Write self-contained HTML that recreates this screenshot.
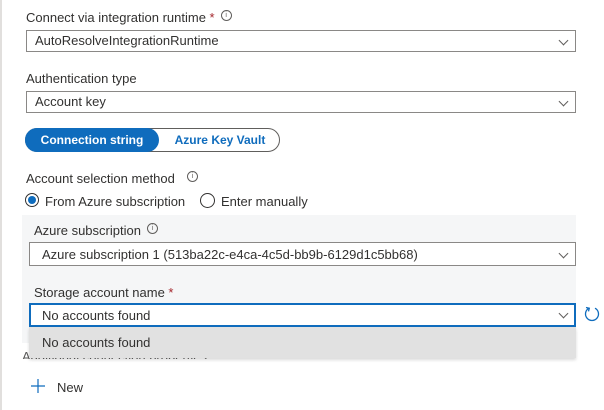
<!DOCTYPE html>
<html><head><style>
body{margin:0;width:604px;height:410px;background:#fff;font-family:"Liberation Sans",sans-serif;font-size:13px;color:#323130;position:relative;overflow:hidden}
.a{position:absolute}
.lbl{font-size:13px;color:#323130}
.inp{position:absolute;border:1px solid #8a8886;background:#fff;box-sizing:border-box;height:22px;line-height:20px;padding-left:8px;font-size:13px}
.chev{position:absolute;right:8px;top:6px;width:6px;height:6px;border-right:1px solid #605e5c;border-bottom:1px solid #605e5c;transform:rotate(45deg)}
.info{display:inline-block;width:9px;height:9px;border:1px solid #605e5c;border-radius:50%;font-size:7px;line-height:9px;text-align:center;vertical-align:top;margin-left:6px;color:#605e5c}
.req{color:#a4262c}
</style></head><body>
<div class="a" style="left:0;top:0;width:2px;height:410px;background:#e1dfdd"></div>
<div class="a lbl" style="left:26px;top:10px">Connect via integration runtime <span class="req">*</span><span class="info">i</span></div>
<div class="inp" style="left:26px;top:30px;width:550px">AutoResolveIntegrationRuntime<div class="chev"></div></div>
<div class="a lbl" style="left:26px;top:71px">Authentication type</div>
<div class="inp" style="left:26px;top:91px;width:550px">Account key<div class="chev"></div></div>
<div class="a" style="left:25px;top:128px;width:255px;height:24px;border:1px solid #605e5c;border-radius:13px;box-sizing:border-box"></div>
<div class="a" style="left:25px;top:128px;width:134px;height:24px;background:#0f6cbd;border-radius:13px;color:#fff;font-weight:bold;font-size:12px;line-height:25px;text-align:center">Connection string</div>
<div class="a" style="left:160px;top:128px;width:120px;height:24px;color:#0f6cbd;font-weight:bold;font-size:12px;line-height:25px;text-align:center">Azure Key Vault</div>
<div class="a lbl" style="left:26px;top:171px">Account selection method<span class="info" style="margin-left:12px">i</span></div>
<div class="a" style="left:25px;top:193px;width:14px;height:14px;border:1px solid #323130;border-radius:50%;box-sizing:border-box"><div style="position:absolute;left:2px;top:2px;width:8px;height:8px;border-radius:50%;background:#0f6cbd"></div></div>
<div class="a lbl" style="left:45px;top:194px">From Azure subscription</div>
<div class="a" style="left:200px;top:193px;width:15px;height:15px;border:1px solid #323130;border-radius:50%;box-sizing:border-box"></div>
<div class="a lbl" style="left:221px;top:194px">Enter manually</div>
<div class="a" style="left:22px;top:215px;width:554px;height:128px;background:#f5f6f7"></div>
<div class="a lbl" style="left:34px;top:223px">Azure subscription<span class="info">i</span></div>
<div class="inp" style="left:29px;top:242px;width:547px;height:24px;line-height:24px;padding-left:12px">Azure subscription 1 (513ba22c-e4ca-4c5d-bb9b-6129d1c5bb68)<div class="chev" style="top:7px"></div></div>
<div class="a lbl" style="left:34px;top:285px">Storage account name <span class="req">*</span></div>
<div class="inp" style="left:29px;top:303px;width:547px;height:24px;border:2px solid #0f6cbd;line-height:22px;padding-left:11px">No accounts found<div class="chev" style="top:5px;right:7px"></div></div>
<div class="a lbl" style="left:22px;top:352px;height:7px;overflow:hidden;line-height:10px;opacity:.8">Additional connection properties</div>
<div class="a" style="left:29px;top:327px;width:547px;height:31px;background:#e1e1e1;box-shadow:0 2px 3px rgba(0,0,0,.15);line-height:31px;padding-left:13px;box-sizing:border-box">No accounts found</div>
<svg class="a" style="left:583px;top:305px" width="18" height="18" viewBox="0 0 18 18"><path d="M6 3.2A6.5 6.5 0 1 0 12 3.2" fill="none" stroke="#0f6cbd" stroke-width="1.3"/><path d="M3 2.5L6.3 3.2L5.5 6.4" fill="none" stroke="#0f6cbd" stroke-width="1.3"/></svg>
<svg class="a" style="left:30px;top:378px" width="16" height="16"><path d="M8 1V15M1 8H15" stroke="#0f6cbd" stroke-width="1.2"/></svg>
<div class="a lbl" style="left:57px;top:380px">New</div>
</body></html>
